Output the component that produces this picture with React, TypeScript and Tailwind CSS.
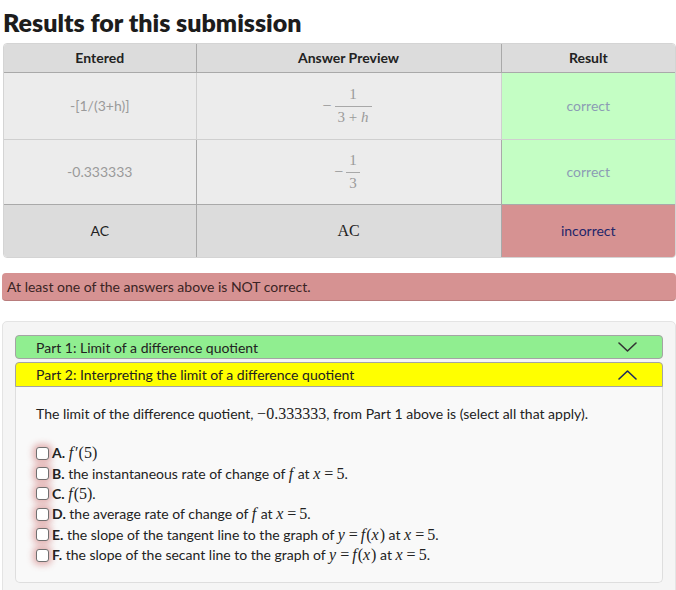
const sans = "font-['Lato','Noto_Sans',sans-serif]";
const serif = "font-['Liberation_Serif','DejaVu_Serif',serif]";

function Frac({ num, den }: { num: React.ReactNode; den: React.ReactNode }) {
  return (
    <span className="inline-flex flex-col items-center align-middle text-[15px] leading-[17px] mx-[3px]">
      <span className="px-[3px] pb-[3px]">{num}</span>
      <span className="px-[3px] pt-[2px] border-t border-[#a8a8a8]">{den}</span>
    </span>
  );
}

function M({ children }: { children: React.ReactNode }) {
  return <span className={`${serif} text-[16px]`}>{children}</span>;
}

const I = ({ children }: { children: React.ReactNode }) => <i className="italic pr-[1px]">{children}</i>;
const Eq = () => <span className="px-[3px]">=</span>;

function Chevron({ up, color }: { up?: boolean; color: string }) {
  return (
    <svg width="19" height="10" viewBox="0 0 19 10" fill="none" stroke={color} strokeWidth="1.6" strokeLinecap="round" strokeLinejoin="round">
      <polyline points={up ? '1,9 9.5,1 18,9' : '1,1 9.5,9 18,1'} />
    </svg>
  );
}

const options = [
  { key: 'A', body: <M><I>f</I><span className="pl-[1px]">′</span>(5)</M> },
  { key: 'B', body: <>the instantaneous rate of change of <M><I>f</I></M> at <M><I>x</I><Eq />5</M>.</> },
  { key: 'C', body: <><M><I>f</I>(5)</M>.</> },
  { key: 'D', body: <>the average rate of change of <M><I>f</I></M> at <M><I>x</I><Eq />5</M>.</> },
  { key: 'E', body: <>the slope of the tangent line to the graph of <M><I>y</I><Eq /><I>f</I>(<I>x</I>)</M> at <M><I>x</I><Eq />5</M>.</> },
  { key: 'F', body: <>the slope of the secant line to the graph of <M><I>y</I><Eq /><I>f</I>(<I>x</I>)</M> at <M><I>x</I><Eq />5</M>.</> },
];

export default function App() {
  return (
    <div className={`${sans} w-[676px] h-[590px] overflow-hidden bg-white text-[14px] text-[#222]`}>
      <h1 className="pl-[3px] pt-[7px] h-[43px] text-[25px] leading-[30px] font-extrabold text-[#1c1c1c]">
        Results for this submission
      </h1>

      {/* Results table */}
      <div className="ml-[3px] w-[673px] border border-[#d4d4d4] rounded-[4px] overflow-hidden">
        <table className="w-full border-collapse table-fixed">
          <thead>
            <tr className="h-[28px] bg-[#dcdcdc]">
              <th className="w-[192px] border-r border-b border-[#a9a9a9] font-bold text-[#222]">Entered</th>
              <th className="w-[305px] border-r border-b border-[#a9a9a9] font-bold text-[#222]">Answer Preview</th>
              <th className="border-b border-[#a9a9a9] font-bold text-[#222]">Result</th>
            </tr>
          </thead>
          <tbody>
            <tr className="h-[67px] bg-[#ececec]">
              <td className="text-center text-[#9a9a9a] border-r border-b border-[#cfcfcf]">-[1/(3+h)]</td>
              <td className={`${serif} text-center text-[#9a9a9a] border-r border-b border-[#cfcfcf]`}>
                <span className="inline-flex items-center">
                  <span className="text-[16px]">−</span>
                  <Frac num="1" den={<><span>3 + </span><i>h</i></>} />
                </span>
              </td>
              <td className="text-center bg-[#c4fec4] text-[#8c9cb4] border-b border-[#cfcfcf]">correct</td>
            </tr>
            <tr className="h-[65px] bg-[#ececec]">
              <td className="text-center text-[#9a9a9a] border-r border-b border-[#a9a9a9]">-0.333333</td>
              <td className={`${serif} text-center text-[#9a9a9a] border-r border-b border-[#a9a9a9]`}>
                <span className="inline-flex items-center">
                  <span className="text-[16px]">−</span>
                  <Frac num="1" den="3" />
                </span>
              </td>
              <td className="text-center bg-[#c4fec4] text-[#8c9cb4] border-b border-[#a9a9a9]">correct</td>
            </tr>
            <tr className="h-[53px] bg-[#dcdcdc]">
              <td className="text-center text-[#222] border-r border-[#a9a9a9]">AC</td>
              <td className={`${serif} text-center text-[16px] text-[#222] border-r border-[#a9a9a9]`}>AC</td>
              <td className="text-center bg-[#d69292] text-[#23266a]">incorrect</td>
            </tr>
          </tbody>
        </table>
      </div>

      {/* Alert */}
      <div className="mt-[15px] ml-[2px] w-[674px] h-[28px] flex items-center pl-[5px] rounded-[4px] bg-[#d69292] border-b border-[#b87c7c] text-[#3a2424]">
        At least one of the answers above is NOT correct.
      </div>

      {/* Problem card */}
      <div className="mt-[20px] ml-[2px] w-[674px] h-[300px] bg-[#f5f5f5] border border-[#e4e4e4] rounded-[5px] pt-[13px] px-[12px]">
        <div className="flex items-center justify-between h-[24px] pl-[20px] pr-[25px] bg-[#90ee90] border border-[#a4a4a4] rounded-[4px] text-[#222]">
          <span>Part 1: Limit of a difference quotient</span>
          <Chevron color="#333" />
        </div>
        <div className="mt-[3px] flex items-center justify-between h-[25px] pl-[20px] pr-[25px] bg-[#ffff00] border border-[#a4a4a4] rounded-t-[4px] text-[#222]">
          <span>Part 2: Interpreting the limit of a difference quotient</span>
          <Chevron up color="#1d2b5e" />
        </div>
        <div className="h-[196px] bg-[#f9f9f9] border border-t-0 border-[#dedede] rounded-b-[5px] pl-[20px] pt-[17px]">
          <p className="leading-[20px] text-[#222]">
            The limit of the difference quotient, <M>−0.333333</M>, from Part 1 above is (select all that apply).
          </p>
          <div className="mt-[19px] flex flex-col">
            {options.map((o) => (
              <label key={o.key} className="flex items-center h-[20.4px] leading-[20px] text-[#222]">
                <span className="shrink-0 w-[13px] h-[13px] mr-[3px] rounded-[3px] border border-[#707070] bg-white shadow-[0_0_6px_3px_rgba(200,90,90,0.45)]" />
                <span className="whitespace-nowrap">
                  <b className="font-bold">{o.key}.</b> {o.body}
                </span>
              </label>
            ))}
          </div>
        </div>
      </div>
    </div>
  );
}
